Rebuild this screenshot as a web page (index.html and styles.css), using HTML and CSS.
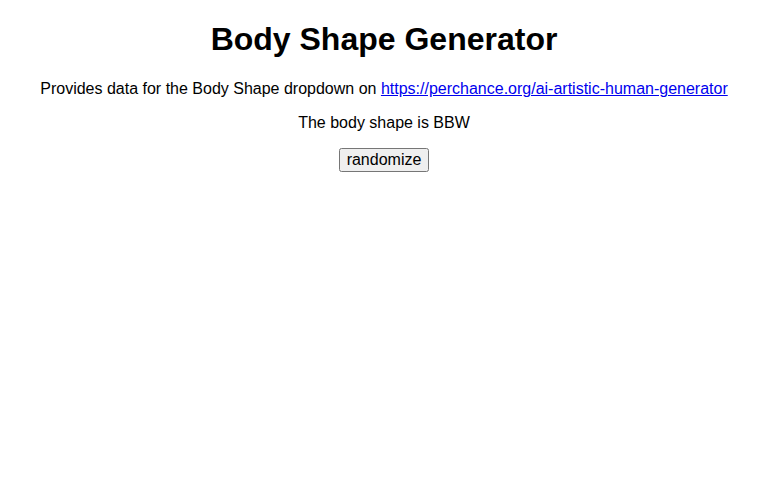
FILE: index.html
```html
<!DOCTYPE html>
<html>
<head>
    <title>Body Shape Generator</title>
    <meta name="viewport" content="width=device-width, initial-scale=1.0">
    <link rel="stylesheet" href="styles.css">
</head>
<body>
    <h1>Body Shape Generator</h1>
    <p>Provides data for the Body Shape dropdown on <a href="https://perchance.org/ai-artistic-human-generator">https://perchance.org/ai-artistic-human-generator</a></p>
    <p id="output">The body shape is BBW</p>
    <button id="randomBtn" onclick="randomize()">randomize</button>

    <script>
        const shapes = ['BBW', 'Slim', 'Athletic', 'Curvy', 'Petite', 'Muscular', 'Average', 'Hourglass'];

        function randomize() {
            const pick = shapes[Math.floor(Math.random() * shapes.length)];
            document.getElementById('output').textContent = 'The body shape is ' + pick;
        }
    </script>
</body>
</html>
```

FILE: styles.css
```css
body {
    background-color: white;
    font-family: "Liberation Sans", Arial, sans-serif;
    text-align: center;
    color: black;
    margin: 0 8px 8px;
}

h1 {
    font-size: 2em;
    margin: 0.67em 0;
}

p {
    font-size: 16px;
    margin: 16px 0;
}

a {
    color: #0000ee;
}

button {
    font-family: "Liberation Sans", Arial, sans-serif;
    font-size: 16px;
    padding: 1px 6px;
    cursor: pointer;
}
```
